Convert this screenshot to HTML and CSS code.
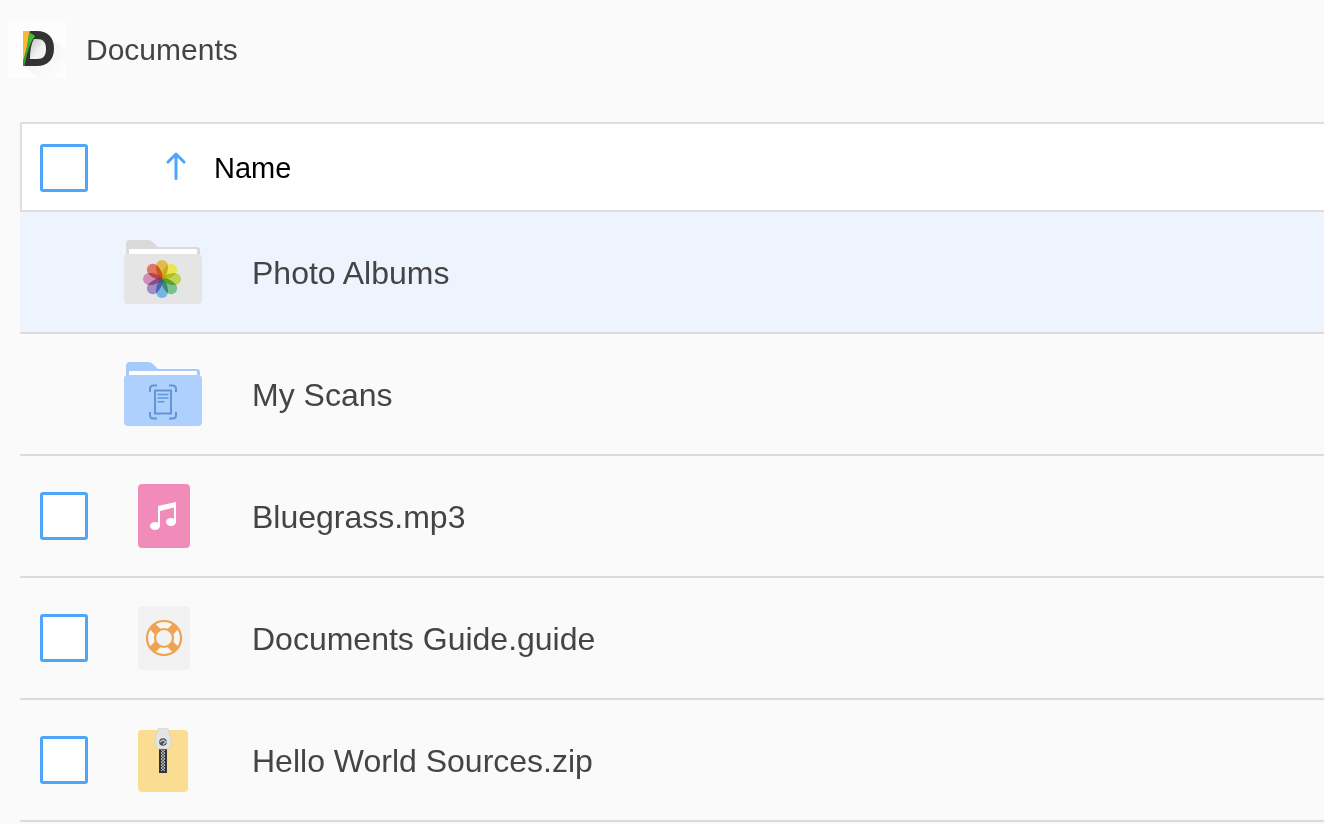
FILE: index.html
```
<!DOCTYPE html>
<html lang="en">
  <head>
    <meta charset="UTF-8" />
    <meta name="viewport" content="width=device-width, initial-scale=1.0" />
    <title>Documents</title>
    <link rel="stylesheet" href="styles.css">
  </head>
  <body>
    <header class="header">
      <svg class="logo" viewBox="0 0 58 58" aria-hidden="true">
        <defs>
          <linearGradient id="shade" x1="0" y1="0" x2="1" y2="1">
            <stop offset="0.3" stop-color="#f2f2f2" />
            <stop offset="0.9" stop-color="#fdfdfd" />
          </linearGradient>
          <linearGradient id="fold" x1="0" y1="0" x2="1" y2="1">
            <stop offset="0" stop-color="#c4c4c4" />
            <stop offset="0.6" stop-color="#f3f3f3" />
          </linearGradient>
          <linearGradient id="green" x1="0" y1="0" x2="1" y2="0">
            <stop offset="0" stop-color="#2f9a2b" />
            <stop offset="1" stop-color="#52c83a" />
          </linearGradient>
        </defs>
        <rect width="58" height="58" fill="#fdfdfd" />
        <path d="M15 46L41 17L58 31V58H32Z" fill="url(#shade)" />
        <path d="M15 11H29C40 11 46 18 46 28.500C46 39 40 46 29 46H15Z" fill="#333" />
        <path d="M26 19H29C35 19 38 22 38 29C38 36 35 39 29 39H22C22 31 23 24 26 19Z" fill="url(#fold)" />
        <path d="M15 11H22L20 23L15 44Z" fill="#fbb83c" />
        <path d="M21 12L27 16C22 22 19 33 16.500 46H15V40C18 33 20 22 21 12Z" fill="url(#green)" />
      </svg>
      <h1>Documents</h1>
    </header>

    <table class="files">
      <thead>
        <tr>
          <th class="check"><input type="checkbox" aria-label="Select all"></th>
          <th class="sort" colspan="2" aria-sort="ascending">
            <button type="button">
              <svg viewBox="0 0 20 32" width="20" height="32" aria-hidden="true">
                <path d="M10 26.500V3M2 10L10 2L18 10" fill="none" stroke="#4da6fa" stroke-width="3" stroke-linecap="round" stroke-linejoin="round" />
              </svg>
              Name
            </button>
          </th>
        </tr>
      </thead>
      <tbody>
        <tr class="active">
          <td class="check"></td>
          <td class="icon">
            <svg viewBox="0 0 78 64" aria-hidden="true">
              <defs>
                <path id="petal" d="M0 0C-4 -2 -6 -7 -6 -13A6 6 0 0 1 6 -13C6 -7 4 -2 0 0Z" />
              </defs>
              <path d="M2 16V4Q2 0 6 0H24Q27 0 29 2L34 7H73Q76 7 76 10V16Z" fill="#dadada" />
              <rect x="5" y="9" width="68" height="8" rx="1" fill="#fff" />
              <path d="M0 18Q0 14 4 14H74Q78 14 78 18V60Q78 64 74 64H4Q0 64 0 60Z" fill="#e5e5e5" />
              <g class="petals" transform="translate(38 39)">
                <use href="#petal" fill="#e3bb4c" />
                <use href="#petal" fill="#e9e654" transform="rotate(45)" />
                <use href="#petal" fill="#c0d556" transform="rotate(90)" />
                <use href="#petal" fill="#7bc18c" transform="rotate(135)" />
                <use href="#petal" fill="#77b4e2" transform="rotate(180)" />
                <use href="#petal" fill="#a08dc3" transform="rotate(225)" />
                <use href="#petal" fill="#cf8eb5" transform="rotate(270)" />
                <use href="#petal" fill="#e07766" transform="rotate(315)" />
              </g>
            </svg>
          </td>
          <td class="name"><a href="#photo-albums">Photo Albums</a></td>
        </tr>
        <tr>
          <td class="check"></td>
          <td class="icon">
            <svg viewBox="0 0 78 64" aria-hidden="true">
              <path d="M2 16V4Q2 0 6 0H24Q27 0 29 2L34 7H73Q76 7 76 10V16Z" fill="#a5cbfb" />
              <rect x="5" y="9" width="68" height="8" rx="1" fill="#fff" />
              <path d="M0 17Q0 13 4 13H74Q78 13 78 17V60Q78 64 74 64H4Q0 64 0 60Z" fill="#aed0fd" />
              <g fill="none" stroke="#6096d8" stroke-width="2">
                <path d="M26 30V27Q26 23.500 29.500 23.500H33M45 23.500H48.500Q52 23.500 52 27V30M52 50V53Q52 56.500 48.500 56.500H45M33 56.500H29.500Q26 56.500 26 53V50" />
                <rect x="31" y="28.500" width="16" height="23" />
                <path d="M33.500 32.500H44.500M33.500 36H44.500M33.500 39.800H40.500" stroke-width="1.600" />
              </g>
            </svg>
          </td>
          <td class="name"><a href="#my-scans">My Scans</a></td>
        </tr>
        <tr>
          <td class="check"><input type="checkbox" aria-label="Select Bluegrass.mp3"></td>
          <td class="icon">
            <svg viewBox="0 0 78 64" aria-hidden="true">
              <rect x="14" width="52" height="64" rx="4" fill="#f18bb9" />
              <g fill="#fff">
                <path d="M34 22L52 18V38H50V23.500L36 27V42H34Z" />
                <ellipse cx="31" cy="42" rx="5" ry="4" />
                <ellipse cx="47" cy="38" rx="5" ry="4" />
              </g>
            </svg>
          </td>
          <td class="name"><a href="#bluegrass">Bluegrass.mp3</a></td>
        </tr>
        <tr>
          <td class="check"><input type="checkbox" aria-label="Select Documents Guide.guide"></td>
          <td class="icon">
            <svg viewBox="0 0 78 64" aria-hidden="true">
              <rect x="14" width="52" height="64" rx="4" fill="#f2f2f2" />
              <g fill="none" stroke="#eda352">
                <circle cx="40" cy="32" r="13" stroke="#f8f6f3" stroke-width="8" />
                <circle cx="40" cy="32" r="17" stroke-width="2.200" />
                <circle cx="40" cy="32" r="9" stroke-width="2.200" />
                <path d="M46 26L52 20M46 38L52 44M34 38L28 44M34 26L28 20" stroke-width="8" />
              </g>
            </svg>
          </td>
          <td class="name"><a href="#guide">Documents Guide.guide</a></td>
        </tr>
        <tr>
          <td class="check"><input type="checkbox" aria-label="Select Hello World Sources.zip"></td>
          <td class="icon">
            <svg viewBox="0 0 78 64" aria-hidden="true">
              <rect x="14" y="2" width="50" height="62" rx="4" fill="#fbdd91" />
              <rect x="35" y="19" width="8" height="26" fill="#303439" />
              <path d="M37 22L41 25L37 28L41 31L37 34L41 37L37 40L41 43M41 22L37 25L41 28L37 31L41 34L37 37L41 40L37 43" fill="none" stroke="#c4c4be" stroke-width="1" />
              <path d="M34 1Q34.200 0 35.500 0H42.500Q43.800 0 44 1L47 12C48 18 45 21 42 21H36C33 21 30 18 31 12Z" fill="#e4e4e4" stroke="#cfcdc6" stroke-width="0.600" />
              <circle cx="39" cy="14" r="3.800" fill="#4a4e53" />
              <path d="M36 14L39 12L42 14L39 16.500" fill="none" stroke="#d4d4d4" stroke-width="1.200" />
            </svg>
          </td>
          <td class="name"><a href="#sources">Hello World Sources.zip</a></td>
        </tr>
      </tbody>
    </table>
  </body>
</html>
```

FILE: styles.css
```
* {
  margin: 0;
  padding: 0;
  box-sizing: border-box;
}
body {
  background-color: #fafafa;
  color: #444;
  font-family: "Liberation Sans", Arial, sans-serif;
}
svg {
  display: block;
}
/* page header */
.header {
  display: flex;
  align-items: center;
  gap: 20px;
  padding: 20px 8px 44px;
}
.header h1 {
  padding-top: 2px;
  font-size: 30px;
  font-weight: normal;
}
.logo {
  width: 58px;
  height: 58px;
}
/* file list */
.files {
  width: calc(100% - 20px);
  margin-left: 20px;
  border-spacing: 0;
  text-align: left;
}
.files th {
  height: 90px;
  padding-top: 2px;
  border-top: 2px solid #dedede;
  border-bottom: 2px solid #dedede;
  background-color: #fff;
  font-weight: normal;
}
.files td {
  height: 122px;
  border-bottom: 2px solid #dcdcde;
}
.files .active td {
  background-color: #edf4fd;
}
.check {
  width: 84px;
  padding-left: 20px;
}
th.check {
  padding-left: 18px;
  border-left: 2px solid #dedede;
}
.check input {
  display: block;
  width: 48px;
  height: 48px;
  border: 3px solid #4da6fa;
  border-radius: 3px;
  background-color: #fff;
  appearance: none;
  cursor: pointer;
}
.check input:checked {
  background-color: #4da6fa;
}
.sort {
  padding-left: 62px;
}
.sort button {
  display: flex;
  align-items: center;
  gap: 28px;
  border: none;
  background: none;
  color: #000;
  font-family: inherit;
  font-size: 29px;
  cursor: pointer;
}
.icon {
  width: 148px;
  padding-left: 20px;
}
.icon svg {
  width: 78px;
  height: 64px;
}
.petals {
  isolation: isolate;
}
.petals use {
  mix-blend-mode: multiply;
}
.name {
  padding-top: 2px;
}
.name a {
  color: #444;
  font-size: 32px;
  text-decoration: none;
}
```
